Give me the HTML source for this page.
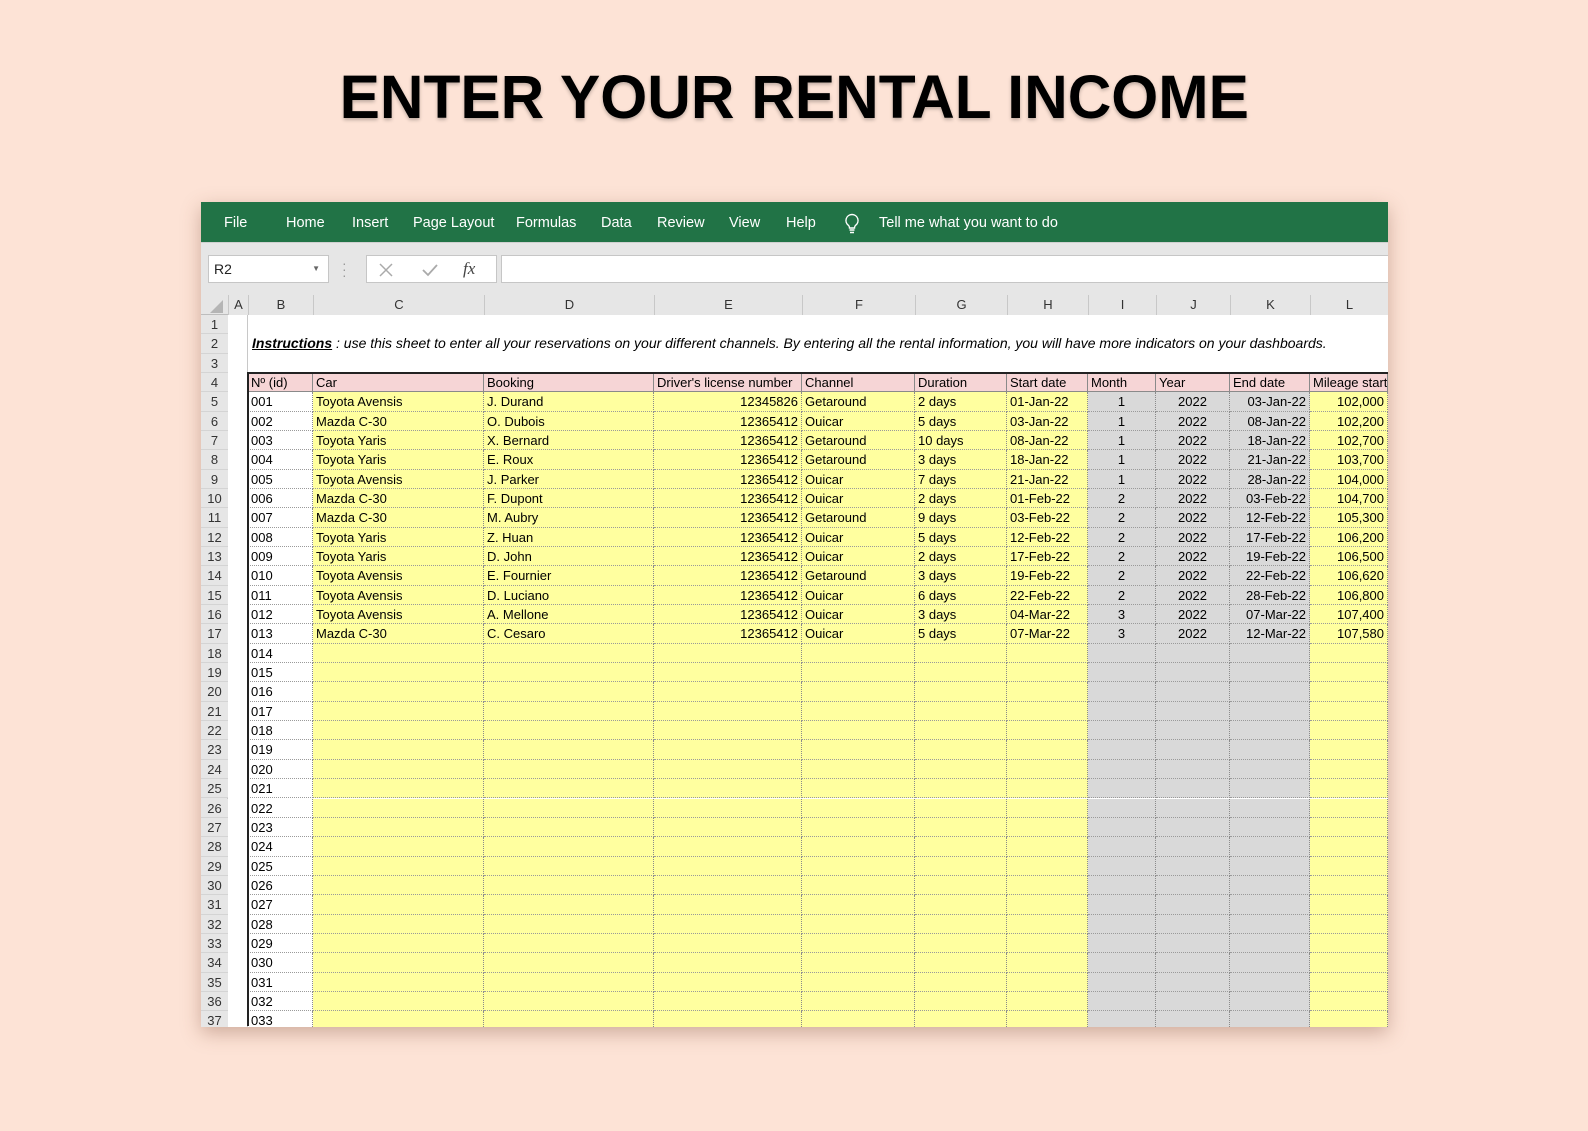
<!DOCTYPE html>
<html><head><meta charset="utf-8">
<style>
*{margin:0;padding:0;box-sizing:border-box}
html{overflow:hidden;width:1588px;height:1131px}
body{width:1588px;height:1131px;background:#fde3d6;position:relative;overflow:hidden;font-family:"Liberation Sans",sans-serif}
#title{position:absolute;left:0;width:1588px;top:62px;text-align:center;font-weight:bold;font-size:61px;color:#000;text-shadow:0 2px 4px rgba(0,0,0,.25)}
#title span{display:inline-block;transform:scaleX(0.99)}
#sheet{position:absolute;left:201px;top:202px;width:1187px;height:825px;background:#fff;box-shadow:0 6px 18px rgba(120,70,50,.35);overflow:hidden}
#rib{position:absolute;left:0;top:0;width:100%;height:40px;background:#217346;color:#fff;font-size:14.5px}
#rib span{position:absolute;top:13px}
#fb{position:absolute;left:0;top:40px;width:100%;height:53px;background:#e6e6e6;border-top:1px solid #d0d0d0}
.box{position:absolute;background:#fff;border:1px solid #c6c6c6}
.c{position:absolute;font-size:13px;color:#000;white-space:nowrap;overflow:hidden;line-height:19px;padding:0 3px}
.h{position:absolute;background:#e6e6e6;color:#333;font-size:13px;text-align:center;line-height:20px}
</style></head><body>
<div id="title"><span>ENTER YOUR RENTAL INCOME</span></div>
<div id="sheet">
 <div id="rib">
  <span style="left:23px">File</span><span style="left:85px">Home</span><span style="left:151px">Insert</span><span style="left:212px">Page Layout</span><span style="left:315px">Formulas</span><span style="left:400px">Data</span><span style="left:456px">Review</span><span style="left:528px">View</span><span style="left:585px">Help</span>
  <svg style="position:absolute;left:643px;top:11px" width="16" height="22" viewBox="0 0 16 22"><path d="M8 1.5a6 6 0 0 0-3.5 10.9c.8.7 1 1.5 1 2.6h5c0-1.1.2-1.9 1-2.6A6 6 0 0 0 8 1.5z" fill="none" stroke="#fff" stroke-width="1.4"/><path d="M5.5 17h5M6 19.5h4" stroke="#fff" stroke-width="1.4"/></svg>
  <span style="left:678px">Tell me what you want to do</span>
 </div>
 <div id="fb">
  <div class="box" style="left:7px;top:12px;width:121px;height:28px;font-size:14px;line-height:26px;padding-left:5px;color:#222">R2<span style="position:absolute;right:8px;top:0;font-size:8px;color:#666">▼</span></div>
  <div style="position:absolute;left:141px;top:17px;color:#999;font-size:14px;line-height:6px">·<br>·<br>·</div>
  <div class="box" style="left:165px;top:12px;width:131px;height:28px">
   <svg style="position:absolute;left:12px;top:7px" width="14" height="14"><path d="M1 1L13 13M13 1L1 13" stroke="#aaa" stroke-width="1.5"/></svg>
   <svg style="position:absolute;left:55px;top:7px" width="16" height="14"><path d="M1 7L6 12L15 2" stroke="#aaa" stroke-width="1.8" fill="none"/></svg>
   <span style="position:absolute;left:96px;top:3px;font-family:'Liberation Serif',serif;font-style:italic;font-size:17px;color:#444">fx</span>
  </div>
  <div class="box" style="left:300px;top:12px;width:900px;height:28px"></div>
 </div>
 <div id="grid"></div>
</div>
<script>
var X=[0,27,47,112,283,453,601,714,806,887,955,1029,1109,1187];
var g=document.getElementById('grid');var H='';
var T0=93, R0=113, RH=19.34;
H+='<div class="h" style="left:0;top:'+T0+'px;width:1187px;height:20px;border-bottom:1px solid #bdbdbd"></div>';
H+='<svg style="position:absolute;left:9px;top:'+(T0+5)+'px" width="13" height="13"><path d="M13 0V13H0Z" fill="#b5b5b5"/></svg>';
var L=['A','B','C','D','E','F','G','H','I','J','K','L'];
for(var i=0;i<12;i++){H+='<div class="h" style="left:'+X[i+1]+'px;top:'+T0+'px;width:'+(X[i+2]-X[i+1])+'px;height:20px;border-left:1px solid #c8c8c8">'+L[i]+'</div>';}
var data=[
['001','Toyota Avensis','J. Durand','12345826','Getaround','2 days','01-Jan-22','1','2022','03-Jan-22','102,000'],
['002','Mazda C-30','O. Dubois','12365412','Ouicar','5 days','03-Jan-22','1','2022','08-Jan-22','102,200'],
['003','Toyota Yaris','X. Bernard','12365412','Getaround','10 days','08-Jan-22','1','2022','18-Jan-22','102,700'],
['004','Toyota Yaris','E. Roux','12365412','Getaround','3 days','18-Jan-22','1','2022','21-Jan-22','103,700'],
['005','Toyota Avensis','J. Parker','12365412','Ouicar','7 days','21-Jan-22','1','2022','28-Jan-22','104,000'],
['006','Mazda C-30','F. Dupont','12365412','Ouicar','2 days','01-Feb-22','2','2022','03-Feb-22','104,700'],
['007','Mazda C-30','M. Aubry','12365412','Getaround','9 days','03-Feb-22','2','2022','12-Feb-22','105,300'],
['008','Toyota Yaris','Z. Huan','12365412','Ouicar','5 days','12-Feb-22','2','2022','17-Feb-22','106,200'],
['009','Toyota Yaris','D. John','12365412','Ouicar','2 days','17-Feb-22','2','2022','19-Feb-22','106,500'],
['010','Toyota Avensis','E. Fournier','12365412','Getaround','3 days','19-Feb-22','2','2022','22-Feb-22','106,620'],
['011','Toyota Avensis','D. Luciano','12365412','Ouicar','6 days','22-Feb-22','2','2022','28-Feb-22','106,800'],
['012','Toyota Avensis','A. Mellone','12365412','Ouicar','3 days','04-Mar-22','3','2022','07-Mar-22','107,400'],
['013','Mazda C-30','C. Cesaro','12365412','Ouicar','5 days','07-Mar-22','3','2022','12-Mar-22','107,580']];
var hdr=['Nº (id)','Car','Booking',"Driver's license number",'Channel','Duration','Start date','Month','Year','End date','Mileage start'];
var al=['left','left','left','right','left','left','left','center','center','right','right'];
var bg=['#fff','#ffff9f','#ffff9f','#ffff9f','#ffff9f','#ffff9f','#ffff9f','#d9d9d9','#d9d9d9','#d9d9d9','#ffff9f'];
H+='<div class="h" style="left:0;top:'+R0+'px;width:27px;height:712px;border-right:1px solid #c8c8c8"></div>';
H+='<div style="position:absolute;left:46px;top:'+R0+'px;width:1px;height:712px;background:#c8c8c8"></div>';
for(var r=1;r<=37;r++){
 var t=R0+(r-1)*RH;
 H+='<div class="h" style="left:0;top:'+t+'px;width:27px;height:'+RH+'px;line-height:'+RH+'px;border-bottom:1px solid #d4d4d4">'+r+'</div>';
 if(r==4){
  for(var c=0;c<11;c++){H+='<div class="c" style="left:'+X[c+2]+'px;top:'+t+'px;width:'+(X[c+3]-X[c+2])+'px;height:'+RH+'px;background:#f6d5d6;border-right:1px solid #8a8a8a;border-bottom:1px solid #8a8a8a">'+hdr[c]+'</div>';}
 } else if(r>=5){
  var d=data[r-5];
  for(var c=0;c<11;c++){
   var txt=d?d[c]:(c==0?('00'+(r-4)).slice(-3):'');
   H+='<div class="c" style="left:'+X[c+2]+'px;top:'+t+'px;width:'+(X[c+3]-X[c+2])+'px;height:'+RH+'px;background:'+bg[c]+';text-align:'+al[c]+';border-right:1px dotted #8a8a8a;border-bottom:1px dotted #9a9a9a">'+txt+'</div>';
  }
 }
}
var t4=R0+3*RH;
H+='<div style="position:absolute;left:'+(X[2]-1)+'px;top:'+(t4-1)+'px;width:'+(1187-X[2]+1)+'px;height:2px;background:#222"></div>';
H+='<div style="position:absolute;left:'+(X[2]-1)+'px;top:'+(t4-1)+'px;width:2px;height:'+(825-t4)+'px;background:#222"></div>';
H+='<div class="c" style="left:'+(X[2]+1)+'px;top:'+(R0+RH)+'px;font-style:italic;font-size:14px;line-height:19px"><b><u>Instructions</u></b> :  use this sheet to enter all your reservations on your different channels. By entering all the rental information, you will have more indicators on your dashboards.</div>';
g.innerHTML=H;
</script>
</body></html>
